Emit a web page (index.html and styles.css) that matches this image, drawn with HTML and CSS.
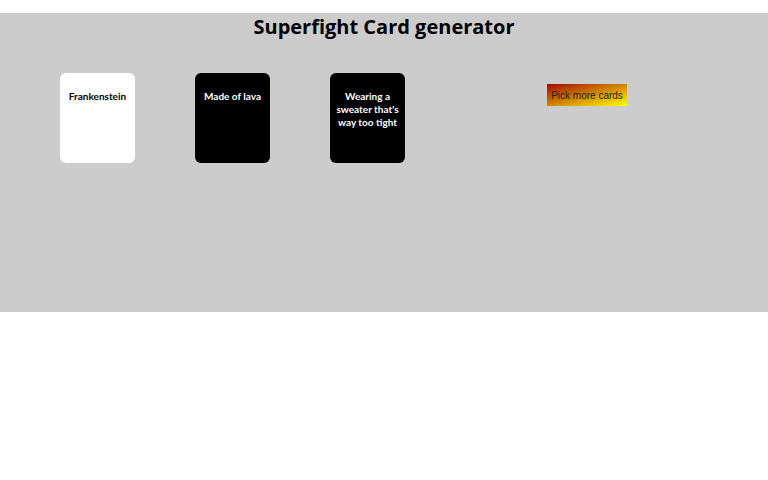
FILE: index.html
```html
<!DOCTYPE html>
<html>
<head>
<meta charset="utf-8">
<link rel="stylesheet" href="styles.css">
</head>
<body>
<div class="main">
  <h1 class="title">Superfight Card generator</h1>
  <div class="row">
    <div class="card white">Frankenstein</div>
    <div class="card black">Made of lava</div>
    <div class="card black">Wearing a sweater that's way too tight</div>
    <button class="pick">Pick more cards</button>
  </div>
</div>
</body>
</html>
```
FILE: styles.css
```css
html, body {
  margin: 0;
  padding: 0;
  background: #fff;
}
.main {
  margin-top: 13px;
  height: 299px;
  background: #cccccc;
  overflow: hidden;
}
.title {
  margin: 0;
  text-align: center;
  font-family: "Open Sans", sans-serif;
  font-weight: 700;
  font-size: 20px;
  line-height: 27px;
  color: #000;
}
.row {
  display: flex;
  align-items: flex-start;
  gap: 60px;
  padding-left: 60px;
  margin-top: 33px;
}
.card {
  box-sizing: border-box;
  width: 75px;
  height: 90px;
  border-radius: 6px;
  padding: 17px 3px 0;
  text-align: center;
  font-family: "Lato", "Noto Sans", sans-serif;
  font-weight: 700;
  font-size: 10px;
  line-height: 13px;
}
.white {
  background: #fff;
  color: #000;
}
.black {
  background: #000;
  color: #fff;
}
.pick {
  margin-left: 82px;
  margin-top: 11px;
  width: 80px;
  height: 22px;
  padding: 0;
  border: none;
  background: linear-gradient(to bottom right, #a00a00, #ffff00);
  font-family: "Liberation Sans", Arial, sans-serif;
  font-size: 10px;
  color: #222;
}
```
